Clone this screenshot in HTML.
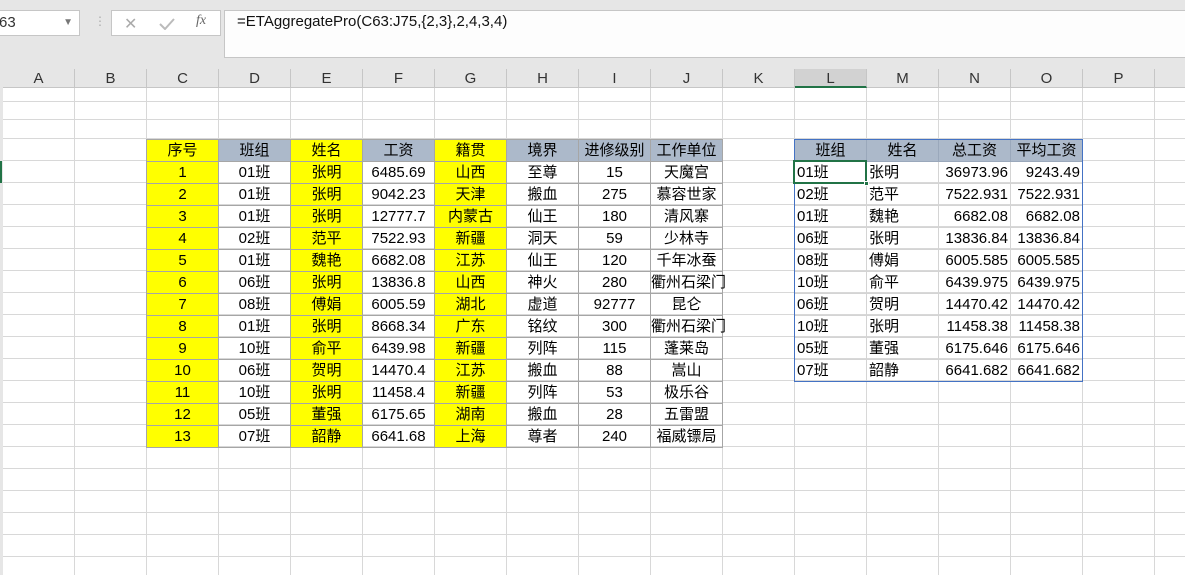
<!DOCTYPE html>
<html><head><meta charset="utf-8"><style>
*{margin:0;padding:0;box-sizing:border-box}
body{width:1185px;height:575px;overflow:hidden;background:#fff;position:relative;font-family:"Liberation Sans","Noto Sans CJK SC",sans-serif;color:#000}
.top{position:absolute;left:0;top:0;width:1185px;height:69px;background:#e6e6e6}
.nb{position:absolute;left:-2px;top:10px;width:82px;height:26px;background:#fff;border:1px solid #c6c6c6;font-size:15px;line-height:24px;color:#333}
.bb{position:absolute;left:111px;top:10px;width:110px;height:26px;background:#fff;border:1px solid #c6c6c6;color:#aaa;font-size:16px}
.fx{position:absolute;left:224px;top:10px;width:970px;height:48px;background:#fdfdfd;border:1px solid #c6c6c6;font-size:15px;padding:2px 0 0 12px;color:#111}
.ch{position:absolute;top:69px;height:19px;width:72px;background:#e6e6e6;border-right:1px solid #c6c6c6;border-bottom:1px solid #c6c6c6;text-align:center;font-size:15px;line-height:19px;color:#333}
.grid{position:absolute;left:3px;top:88px;width:1182px;height:487px;
background-image:repeating-linear-gradient(to right,transparent 0 71px,#d8d8d8 71px 72px),
linear-gradient(to bottom,transparent 0 13px,#d8d8d8 13px 14px,transparent 14px 31px,#d8d8d8 31px 32px,transparent 32px 50px,#d8d8d8 50px 51px,transparent 51px),
repeating-linear-gradient(to bottom,transparent 0 21px,#d8d8d8 21px 22px);
background-size:100% 100%,100% 51px,100% 436px;background-position:0 0,0 0,0 51px;background-repeat:no-repeat,no-repeat,no-repeat}
table{position:absolute;border-collapse:collapse;table-layout:fixed;font-size:15px}
td{height:22px;padding:0;white-space:nowrap;overflow:visible;line-height:20px}
.t1{left:146px;top:139px;width:577px}
.t1 td{width:72px;border:1px solid #a6a6a6;text-align:center}
.y{background:#ffff00}.g{background:#acb9ca}
.t2{left:794px;top:139px;width:289px;outline:1px solid #4472c4;outline-offset:-1px}
.t2 td{width:72px;border:1px solid #d4d4d4}
.t2 tr:first-child td{background:#acb9ca;text-align:center;border-color:#9aa8bb}
.r{text-align:right;padding-right:2px!important}
.l{padding-left:2px!important}
</style></head><body>
<div class="top"></div>
<div class="nb">63<span style="position:absolute;right:6px;top:0;font-size:10px;color:#777">▼</span></div>
<div style="position:absolute;left:94px;top:14px;color:#aaa;font-size:12px">⋮</div>
<div class="bb"><span style="position:absolute;left:12px;top:3px">✕</span><svg style="position:absolute;left:47px;top:7px" width="16" height="12"><path d="M1 6 L6 11 L15 1" stroke="#bbb" stroke-width="2" fill="none"/></svg><span style="position:absolute;left:84px;top:2px;font-family:'Liberation Serif';font-style:italic;color:#666;font-size:14px">fx</span></div>
<div class="fx">=ETAggregatePro(C63:J75,{2,3},2,4,3,4)</div>
<div class="grid"></div>
<div class="ch" style="left:3px">A</div><div class="ch" style="left:75px">B</div><div class="ch" style="left:147px">C</div><div class="ch" style="left:219px">D</div><div class="ch" style="left:291px">E</div><div class="ch" style="left:363px">F</div><div class="ch" style="left:435px">G</div><div class="ch" style="left:507px">H</div><div class="ch" style="left:579px">I</div><div class="ch" style="left:651px">J</div><div class="ch" style="left:723px">K</div><div class="ch" style="left:795px;background:#d2d2d2;border-bottom:2px solid #217346">L</div><div class="ch" style="left:867px">M</div><div class="ch" style="left:939px">N</div><div class="ch" style="left:1011px">O</div><div class="ch" style="left:1083px">P</div><div class="ch" style="left:1155px"></div>
<div style="position:absolute;left:0;top:69px;width:3px;height:506px;background:#e6e6e6"></div>
<div style="position:absolute;left:0;top:161px;width:2px;height:22px;background:#217346"></div>
<table class="t1">
<tr><td class="y">序号</td><td class="g">班组</td><td class="y">姓名</td><td class="g">工资</td><td class="y">籍贯</td><td class="g">境界</td><td class="g">进修级别</td><td class="g">工作单位</td></tr>
<tr><td class="y">1</td><td>01班</td><td class="y">张明</td><td>6485.69</td><td class="y">山西</td><td>至尊</td><td>15</td><td>天魔宫</td></tr>
<tr><td class="y">2</td><td>01班</td><td class="y">张明</td><td>9042.23</td><td class="y">天津</td><td>搬血</td><td>275</td><td>慕容世家</td></tr>
<tr><td class="y">3</td><td>01班</td><td class="y">张明</td><td>12777.7</td><td class="y">内蒙古</td><td>仙王</td><td>180</td><td>清风寨</td></tr>
<tr><td class="y">4</td><td>02班</td><td class="y">范平</td><td>7522.93</td><td class="y">新疆</td><td>洞天</td><td>59</td><td>少林寺</td></tr>
<tr><td class="y">5</td><td>01班</td><td class="y">魏艳</td><td>6682.08</td><td class="y">江苏</td><td>仙王</td><td>120</td><td>千年冰蚕</td></tr>
<tr><td class="y">6</td><td>06班</td><td class="y">张明</td><td>13836.8</td><td class="y">山西</td><td>神火</td><td>280</td><td>衢州石梁门</td></tr>
<tr><td class="y">7</td><td>08班</td><td class="y">傅娟</td><td>6005.59</td><td class="y">湖北</td><td>虚道</td><td>92777</td><td>昆仑</td></tr>
<tr><td class="y">8</td><td>01班</td><td class="y">张明</td><td>8668.34</td><td class="y">广东</td><td>铭纹</td><td>300</td><td>衢州石梁门</td></tr>
<tr><td class="y">9</td><td>10班</td><td class="y">俞平</td><td>6439.98</td><td class="y">新疆</td><td>列阵</td><td>115</td><td>蓬莱岛</td></tr>
<tr><td class="y">10</td><td>06班</td><td class="y">贺明</td><td>14470.4</td><td class="y">江苏</td><td>搬血</td><td>88</td><td>嵩山</td></tr>
<tr><td class="y">11</td><td>10班</td><td class="y">张明</td><td>11458.4</td><td class="y">新疆</td><td>列阵</td><td>53</td><td>极乐谷</td></tr>
<tr><td class="y">12</td><td>05班</td><td class="y">董强</td><td>6175.65</td><td class="y">湖南</td><td>搬血</td><td>28</td><td>五雷盟</td></tr>
<tr><td class="y">13</td><td>07班</td><td class="y">韶静</td><td>6641.68</td><td class="y">上海</td><td>尊者</td><td>240</td><td>福威镖局</td></tr>
</table>
<table class="t2">
<tr><td>班组</td><td>姓名</td><td>总工资</td><td>平均工资</td></tr>
<tr><td class="l">01班</td><td class="l">张明</td><td class="r">36973.96</td><td class="r">9243.49</td></tr>
<tr><td class="l">02班</td><td class="l">范平</td><td class="r">7522.931</td><td class="r">7522.931</td></tr>
<tr><td class="l">01班</td><td class="l">魏艳</td><td class="r">6682.08</td><td class="r">6682.08</td></tr>
<tr><td class="l">06班</td><td class="l">张明</td><td class="r">13836.84</td><td class="r">13836.84</td></tr>
<tr><td class="l">08班</td><td class="l">傅娟</td><td class="r">6005.585</td><td class="r">6005.585</td></tr>
<tr><td class="l">10班</td><td class="l">俞平</td><td class="r">6439.975</td><td class="r">6439.975</td></tr>
<tr><td class="l">06班</td><td class="l">贺明</td><td class="r">14470.42</td><td class="r">14470.42</td></tr>
<tr><td class="l">10班</td><td class="l">张明</td><td class="r">11458.38</td><td class="r">11458.38</td></tr>
<tr><td class="l">05班</td><td class="l">董强</td><td class="r">6175.646</td><td class="r">6175.646</td></tr>
<tr><td class="l">07班</td><td class="l">韶静</td><td class="r">6641.682</td><td class="r">6641.682</td></tr>
</table>
<div style="position:absolute;left:793px;top:160px;width:74px;height:24px;border:2px solid #217346"></div>
<div style="position:absolute;left:864px;top:181px;width:5px;height:5px;background:#217346;border:1px solid #fff"></div>
</body></html>
